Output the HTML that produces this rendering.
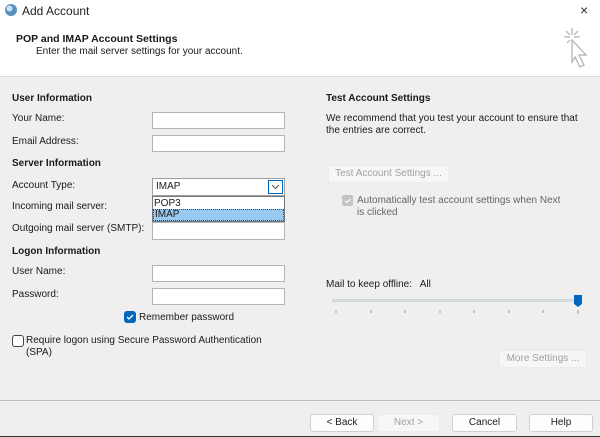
<!DOCTYPE html>
<html><head><meta charset="utf-8"><style>
*{margin:0;padding:0;box-sizing:border-box}
body{width:600px;height:437px;overflow:hidden;background:#efefef;font-family:"Liberation Sans",sans-serif;font-size:10px;color:#1a1a1a;position:relative}
.a{position:absolute;white-space:nowrap}
.b{font-weight:bold}
.tb{position:absolute;background:#fff;border:1px solid #b4b4b4;width:133px;height:17px}
.btn{position:absolute;background:#fdfdfd;border:1px solid #d0d0d0;border-radius:3px;height:18px;text-align:center;line-height:16px;font-size:10px}
.dis{color:#a0a0a0;background:#f7f7f7;border-color:#ececec}
</style></head><body>
<div class="a" style="left:0;top:0;width:600px;height:76px;background:#fff"></div>
<div class="a" style="left:0;top:76px;width:600px;height:1px;background:#dcdcdc"></div>
<svg class="a" style="left:4px;top:3px" width="14" height="14"><circle cx="7" cy="7" r="6" fill="#5a8fc0"/><circle cx="5.5" cy="5.5" r="3" fill="#cfe3f2"/></svg>
<div class="a" style="left:22px;top:4px;font-size:12px;color:#222">Add Account</div>
<div class="a" style="left:580px;top:2px;font-size:14px;color:#333">×</div>
<svg class="a" style="left:560px;top:26px" width="34" height="46"><g stroke="#b0b0b0" stroke-width="1.2" fill="none"><path d="M12 2v7M4 11h6M14 11h6M6 5l4 4M18 5l-4 4M7 17l3-3"/><path d="M12 14l14 15-7 0 5 10-4 2-5-10-3 5z" fill="#fff"/></g></svg>
<div class="a b" style="left:16px;top:33px;font-size:10.5px">POP and IMAP Account Settings</div>
<div class="a" style="left:36px;top:46px">Enter the mail server settings for your account.</div>

<div class="a b" style="left:12px;top:93px">User Information</div>
<div class="a" style="left:12px;top:113px">Your Name:</div>
<div class="tb" style="left:152px;top:112px"></div>
<div class="a" style="left:12px;top:136px">Email Address:</div>
<div class="tb" style="left:152px;top:135px"></div>
<div class="a b" style="left:12px;top:158px">Server Information</div>
<div class="a" style="left:12px;top:180px">Account Type:</div>
<div class="tb" style="left:152px;top:178px;height:18px;border-color:#a0a0a0"><span class="a" style="left:3px;top:2px">IMAP</span><div class="a" style="right:1px;top:1px;width:15px;height:14px;border:1px solid #0067c0"><svg width="13" height="12"><path d="M3 4l3.5 3.5L10 4" stroke="#555" fill="none"/></svg></div></div>
<div class="a" style="left:12px;top:201px">Incoming mail server:</div>
<div class="a" style="left:12px;top:223px">Outgoing mail server (SMTP):</div>
<div class="tb" style="left:152px;top:222px;height:18px"></div>
<div class="a" style="left:152px;top:196px;width:133px;height:26px;background:#fff;border:1px solid #777"><div class="a" style="left:1px;top:1px">POP3</div><div class="a" style="left:0;top:12px;width:131px;height:12px;background:#99c9ef;border:1px dotted #444;padding-left:1px;line-height:10px">IMAP</div></div>
<div class="a b" style="left:12px;top:246px">Logon Information</div>
<div class="a" style="left:12px;top:266px">User Name:</div>
<div class="tb" style="left:152px;top:265px"></div>
<div class="a" style="left:12px;top:289px">Password:</div>
<div class="tb" style="left:152px;top:288px"></div>
<div class="a" style="left:124px;top:311px;width:12px;height:12px;background:#0067c0;border-radius:3px"><svg width="12" height="12"><path d="M3 6l2 2 4-4" stroke="#fff" fill="none" stroke-width="1.3"/></svg></div>
<div class="a" style="left:139px;top:312px">Remember password</div>
<div class="a" style="left:12px;top:335px;width:12px;height:12px;border:1px solid #444;border-radius:3px;background:#fff"></div>
<div class="a" style="left:26px;top:335px">Require logon using Secure Password Authentication</div>
<div class="a" style="left:26px;top:347px">(SPA)</div>

<div class="a b" style="left:326px;top:93px">Test Account Settings</div>
<div class="a" style="left:326px;top:113px">We recommend that you test your account to ensure that</div>
<div class="a" style="left:326px;top:125px">the entries are correct.</div>
<div class="btn dis" style="left:328px;top:165px;width:121px">Test Account Settings ...</div>
<div class="a" style="left:342px;top:195px;width:11px;height:11px;background:#c4c4c4;border-radius:2px"><svg width="11" height="11"><path d="M3 5.5l2 2 3.5-3.5" stroke="#fff" fill="none"/></svg></div>
<div class="a" style="left:357px;top:195px;color:#666">Automatically test account settings when Next</div>
<div class="a" style="left:357px;top:207px;color:#666">is clicked</div>
<div class="a" style="left:326px;top:279px">Mail to keep offline:&nbsp;&nbsp; All</div>
<div class="a" style="left:332px;top:299px;width:246px;height:3px;background:#dde2e2;border:1px solid #cfd6d6"></div>
<svg class="a" style="left:573px;top:294px" width="10" height="14"><path d="M1 1h8v9l-4 3-4-3z" fill="#0067c0"/></svg>
<svg class="a" style="left:330px;top:309px" width="252" height="6"><g stroke="#999"><path d="M6 1v3M41 1v3M75 1v3M110 1v3M144 1v3M179 1v3M213 1v3M248 1v4"/></g></svg>
<div class="btn dis" style="left:499px;top:350px;width:88px;background:#f6f6f6">More Settings ...</div>

<div class="a" style="left:0;top:400px;width:600px;height:1px;background:#bdbdbd"></div>
<div class="btn" style="left:310px;top:414px;width:64px">&lt; Back</div>
<div class="btn dis" style="left:377px;top:414px;width:63px">Next &gt;</div>
<div class="btn" style="left:452px;top:414px;width:65px">Cancel</div>
<div class="btn" style="left:529px;top:414px;width:64px">Help</div>
<div class="a" style="left:0;top:436px;width:600px;height:1px;background:#333"></div>
</body></html>
